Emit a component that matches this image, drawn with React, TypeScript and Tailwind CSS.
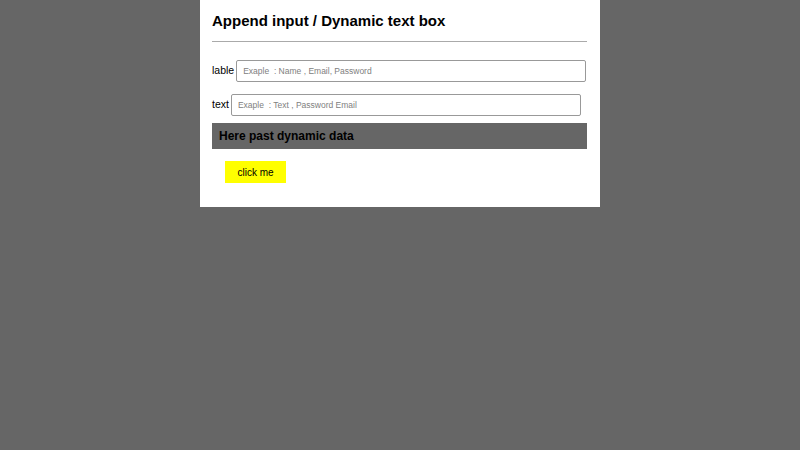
import React from 'react'

export default function App() {
  return (
    <div className="min-h-[450px] w-full bg-[#666666] font-['Liberation_Sans',Arial,sans-serif]">
      <div className="mx-auto w-[400px] bg-white pl-3 pr-[13px] pt-[11px] pb-[24px]">
        <h1 className="text-[15px] font-bold leading-[20px] text-black">Append input / Dynamic text box</h1>
        <hr className="mt-[10px] border-t border-[#aaaaaa]" />

        <div className="mt-[18px] flex items-center">
          <label className="mr-[2px] text-[10.5px] text-black">lable</label>
          <input
            className="h-[22px] w-[350px] rounded-[2px] border border-[#999999] px-[6px] text-[8.5px] text-black placeholder:text-[#808080] outline-none"
            placeholder="Exaple  : Name , Email, Password"
          />
        </div>

        <div className="mt-[12px] flex items-center">
          <label className="mr-[2px] text-[10.5px] text-black">text</label>
          <input
            className="h-[22px] w-[350px] rounded-[2px] border border-[#999999] px-[6px] text-[8.5px] text-black placeholder:text-[#808080] outline-none"
            placeholder="Exaple  : Text , Password Email"
          />
        </div>

        <div className="mt-[7px] flex h-[26px] items-center bg-[#666666] px-[7px] text-[12px] font-bold text-black">
          Here past dynamic data
        </div>

        <button className="mt-[12px] ml-[13px] h-[22px] w-[61px] bg-[#ffff00] text-[10px] text-black">
          click me
        </button>
      </div>
    </div>
  )
}
